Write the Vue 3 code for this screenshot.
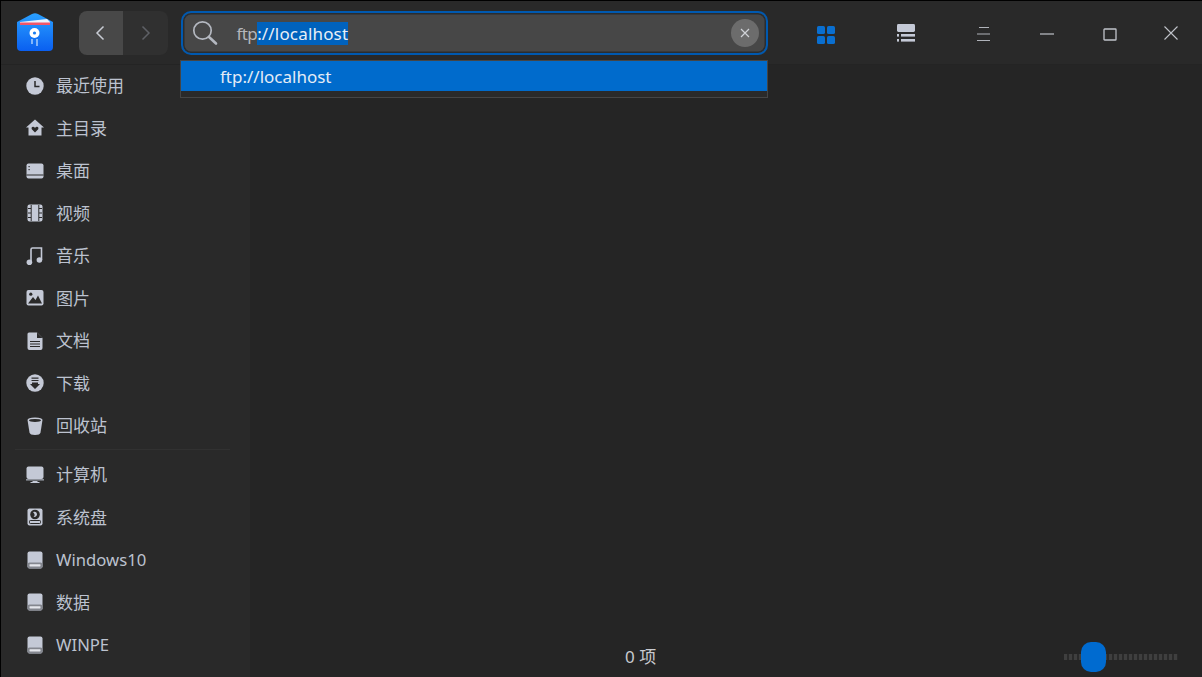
<template>
  <div class="window">
    <header class="titlebar">
      <svg class="logo" width="36" height="38" viewBox="0 0 36 38">
        <defs>
          <linearGradient id="logoBlue" x1="0" y1="0" x2="0" y2="1">
            <stop offset="0" stop-color="#2aa0ff" />
            <stop offset="1" stop-color="#0a5ff0" />
          </linearGradient>
        </defs>
        <path d="M0 9 L15 1 Q18 -0.5 21 1 L36 9 V34 Q36 38 32 38 H4 Q0 38 0 34 Z" fill="url(#logoBlue)" />
        <path d="M3 9 L30 6 L33 9 V11 H3 Z" fill="#fff" opacity="0.9" />
        <path d="M3 9.5 H33 V12 H3 Z" fill="#f0566a" />
        <circle cx="17.5" cy="20" r="5" fill="#fff" />
        <circle cx="17.5" cy="20" r="1.6" fill="#1a7cf0" />
        <path d="M15 26 V31 M20 26 V33" stroke="#cfe6ff" stroke-width="1.2" fill="none" />
      </svg>

      <div class="nav-group">
        <button class="nav-btn nav-back">
          <svg width="10" height="16" viewBox="0 0 10 16"><path d="M8.5 1.5 L2 8 L8.5 14.5" fill="none" stroke="#c8ccd4" stroke-width="1.5" /></svg>
        </button>
        <button class="nav-btn nav-forward">
          <svg width="10" height="16" viewBox="0 0 10 16"><path d="M1.5 1.5 L8 8 L1.5 14.5" fill="none" stroke="#5e6066" stroke-width="1.5" /></svg>
        </button>
      </div>

      <div class="search-box">
        <svg class="search-icon" width="26" height="26" viewBox="0 0 26 26">
          <circle cx="10.5" cy="10.5" r="8.7" fill="none" stroke="#b4b8c0" stroke-width="1.7" />
          <path d="M17 17 L24 23.5" stroke="#b4b8c0" stroke-width="2.6" stroke-linecap="round" />
        </svg>
        <div class="search-text"><span class="typed">ftp</span><span class="selected">://localhost</span></div>
        <button class="clear-btn">
          <svg width="10" height="10" viewBox="0 0 10 10"><path d="M1 1 L9 9 M9 1 L1 9" stroke="#d0d3d8" stroke-width="1.2" /></svg>
        </button>
      </div>

      <div class="tools">
        <button class="tool tool-grid">
          <svg width="18" height="18" viewBox="0 0 18 18" fill="#0a6fd0">
            <rect x="0" y="0" width="8" height="8" rx="1.6" />
            <rect x="10" y="0" width="8" height="8" rx="1.6" />
            <rect x="0" y="10" width="8" height="8" rx="1.6" />
            <rect x="10" y="10" width="8" height="8" rx="1.6" />
          </svg>
        </button>
        <button class="tool tool-list">
          <svg width="18" height="18" viewBox="0 0 18 18" fill="#c4c9d6">
            <rect x="0" y="0" width="18" height="8" rx="1.4" />
            <rect x="0" y="10" width="2" height="2.6" />
            <rect x="4" y="10" width="14" height="2.6" />
            <rect x="0" y="15" width="2" height="2.6" />
            <rect x="4" y="15" width="14" height="2.6" />
          </svg>
        </button>
        <button class="tool tool-menu">
          <svg width="14" height="14" viewBox="0 0 14 14" stroke="#b0b3ba" stroke-width="1" fill="none">
            <path d="M2 0.5 H12 M0 7 H13 M0 13.5 H13" />
          </svg>
        </button>
        <button class="tool tool-min">
          <svg width="14" height="2" viewBox="0 0 14 2"><path d="M0 1 H14" stroke="#c0c3ca" stroke-width="1.2" /></svg>
        </button>
        <button class="tool tool-max">
          <svg width="14" height="13" viewBox="0 0 14 13"><rect x="1" y="1" width="12" height="11" fill="none" stroke="#c0c3ca" stroke-width="1.3" rx="0.6" /></svg>
        </button>
        <button class="tool tool-close">
          <svg width="14" height="14" viewBox="0 0 14 14"><path d="M0.5 0.5 L13.5 13.5 M13.5 0.5 L0.5 13.5" stroke="#c0c3ca" stroke-width="1.1" /></svg>
        </button>
      </div>
    </header>

    <div class="suggest">
      <div class="suggest-item">ftp://localhost</div>
    </div>

    <div class="body">
      <aside class="sidebar">
        <div v-for="item in places" :key="item.label" class="side-item">
          <svg class="side-icon" width="18" height="18" viewBox="0 0 18 18" v-html="icons[item.icon]"></svg>
          <span class="side-label">{{ item.label }}</span>
        </div>
        <div class="separator"></div>
        <div v-for="item in devices" :key="item.label" class="side-item">
          <svg class="side-icon" width="18" height="18" viewBox="0 0 18 18" v-html="icons[item.icon]"></svg>
          <span class="side-label" :class="{ latin: item.latin }">{{ item.label }}</span>
        </div>
      </aside>

      <main class="content">
        <div class="file-area"></div>
        <footer class="statusbar">
          <span class="count">0 项</span>
          <div class="slider">
            <div class="slider-thumb"></div>
          </div>
        </footer>
      </main>
    </div>
  </div>
</template>

<script setup>
const places = [
  { label: '最近使用', icon: 'clock' },
  { label: '主目录', icon: 'home' },
  { label: '桌面', icon: 'desktop' },
  { label: '视频', icon: 'film' },
  { label: '音乐', icon: 'music' },
  { label: '图片', icon: 'picture' },
  { label: '文档', icon: 'doc' },
  { label: '下载', icon: 'download' },
  { label: '回收站', icon: 'trash' }
]

const devices = [
  { label: '计算机', icon: 'computer' },
  { label: '系统盘', icon: 'sysdisk' },
  { label: 'Windows10', icon: 'disk', latin: true },
  { label: '数据', icon: 'disk' },
  { label: 'WINPE', icon: 'disk', latin: true }
]

// 侧边栏图标
const c = '#c4c9d6'
const d = '#2a2a2a'
const icons = {
  clock: `<circle cx="9" cy="9" r="8.7" fill="${c}"/><path d="M9 4 V9.6 H13.5" fill="none" stroke="${d}" stroke-width="1.5"/>`,
  home: `<path d="M9 0.5 L18 8.5 H15.5 V16.5 H2.5 V8.5 H0 Z" fill="${c}"/><path d="M9 13.5 L5.8 10.3 Q5 8 7 7.8 Q8.4 7.8 9 9 Q9.6 7.8 11 7.8 Q13 8 12.2 10.3 Z" fill="${d}"/>`,
  desktop: `<rect x="0.5" y="1.5" width="17" height="15" rx="2" fill="${c}"/><path d="M0.5 13 H17.5" stroke="${d}" stroke-width="1"/><rect x="2.5" y="4" width="1.2" height="1.2" fill="${d}"/><rect x="2.5" y="7" width="1.2" height="1.2" fill="${d}"/>`,
  film: `<rect x="1.5" y="0.5" width="15" height="17" rx="2" fill="${c}"/><path d="M5.2 1 V17 M12.8 1 V17" stroke="${d}" stroke-width="1"/><path d="M2 4.5 H5 M2 9 H5 M2 13.5 H5 M13 4.5 H16 M13 9 H16 M13 13.5 H16" stroke="${d}" stroke-width="1"/>`,
  music: `<path d="M5 15 V2.5 Q5 1 6.5 1 H15.5 V13" fill="none" stroke="${c}" stroke-width="1.6"/><circle cx="3.4" cy="15.2" r="2.8" fill="${c}"/><circle cx="13.4" cy="13" r="2.8" fill="${c}"/>`,
  picture: `<rect x="0.5" y="1" width="17" height="15.5" rx="2" fill="${c}"/><circle cx="4.8" cy="5.2" r="1.6" fill="${d}"/><path d="M2 14.5 L7 8 L9.5 11 L12 6.5 L16 14.5 Z" fill="${d}"/>`,
  doc: `<path d="M3 0.5 H11 L16.5 6 V16 Q16.5 18 14.5 18 H3.5 Q1.5 18 1.5 16 V2 Q1.5 0.5 3 0.5 Z" fill="${c}"/><path d="M11 0.5 V6 H16.5" fill="${d}"/><path d="M4 9.5 H14 M4 12 H14 M4 14.5 H14" stroke="${d}" stroke-width="1"/>`,
  download: `<circle cx="9" cy="9" r="8.7" fill="${c}"/><path d="M5.5 4.2 H12.5 M5.5 6.5 H12.5" stroke="${d}" stroke-width="1.2"/><path d="M6 8.5 H12 V10 H14 L9 15 L4 10 H6 Z" fill="${d}"/>`,
  trash: `<path d="M1.5 3 Q1.5 0.5 9 0.5 Q16.5 0.5 16.5 3 L14.5 15.5 Q14 18 9 18 Q4 18 3.5 15.5 Z" fill="${c}"/><ellipse cx="9" cy="3.4" rx="6" ry="1.5" fill="${d}"/>`,
  computer: `<rect x="0.5" y="0.5" width="17" height="12.5" rx="2" fill="${c}"/><rect x="0" y="13" width="18" height="1.6" fill="#8e929b"/><path d="M6.5 15 H11.5 V16 H13.5 V17 H4.5 V16 H6.5 Z" fill="${c}"/>`,
  sysdisk: `<rect x="1.5" y="0.5" width="15" height="17" rx="2" fill="${c}"/><circle cx="9" cy="6.5" r="4.8" fill="${d}"/><path d="M7 4 Q11 3 11 7 Q10 9.5 7.5 9 Q10 7 7 4 Z" fill="${c}"/><rect x="3.5" y="12.5" width="11" height="3" rx="0.8" fill="none" stroke="${d}" stroke-width="1"/>`,
  disk: `<rect x="1.5" y="0.5" width="15" height="17" rx="2" fill="${c}"/><rect x="1.5" y="11.5" width="15" height="6" rx="2" fill="#84878f"/><rect x="3.5" y="13.2" width="11" height="2.2" rx="0.6" fill="#e4e6ec"/>`
}
</script>

<style>
html,
body {
  margin: 0;
  height: 100%;
  background: #252525;
  overflow: hidden;
}
</style>

<style scoped>
.window {
  position: relative;
  width: 1202px;
  height: 677px;
  box-sizing: border-box;
  display: flex;
  flex-direction: column;
  background: #252525;
  border-top: 1px solid #000;
  border-left: 1px solid #000;
  font-family: "Noto Sans", "Noto Sans CJK SC", sans-serif;
  font-size: 17px;
  color: #bcc2cf;
  overflow: hidden;
}

button {
  border: none;
  padding: 0;
  background: none;
  display: flex;
  align-items: center;
  justify-content: center;
}

.titlebar {
  height: 64px;
  flex: none;
  display: flex;
  align-items: flex-start;
  background: #292929;
  border-bottom: 1px solid #242424;
  box-sizing: border-box;
}

.logo {
  margin: 12px 0 0 16px;
  flex: none;
}

.nav-group {
  display: flex;
  margin: 10px 0 0 26px;
  height: 44px;
  border-radius: 8px;
  overflow: hidden;
}

.nav-btn {
  height: 44px;
}

.nav-back {
  width: 44px;
  padding-right: 2px;
  background: #484848;
}

.nav-forward {
  width: 45px;
  background: #303030;
}

.search-box {
  margin: 10px 0 0 13px;
  width: 587px;
  height: 44px;
  box-sizing: border-box;
  display: flex;
  align-items: center;
  background: #474747;
  border: 2.5px solid #0059b0;
  border-radius: 10px;
  box-shadow: inset 0 0 0 1.5px #2a2d30;
}

.search-icon {
  margin-left: 8.5px;
  flex: none;
}

.search-text {
  margin-left: 19px;
  flex: 1;
  line-height: 23px;
  color: #b4b6ba;
}

.typed {
  letter-spacing: -0.6px;
}

.selected {
  display: inline-block;
  letter-spacing: 0.17px;
  background: #0062bd;
  color: #e8eef6;
}

.clear-btn {
  width: 28px;
  height: 28px;
  margin-right: 7.5px;
  border-radius: 50%;
  background: #6c6c6c;
}

.tools {
  flex: 1;
  height: 64px;
  display: grid;
  grid-template-columns: 80px 80px 75px 52px 73px 50px;
  padding-left: 18px;
  align-items: center;
  justify-items: center;
}

.tool {
  height: 64px;
  width: 100%;
}

.tool-grid {
  padding-top: 4px;
}

.tool-menu {
  padding-top: 2px;
}

.tool-min {
  padding-top: 2px;
}

.tool-max {
  padding-top: 3px;
}

.suggest {
  position: absolute;
  left: 179px;
  top: 59px;
  width: 588px;
  height: 38px;
  box-sizing: border-box;
  background: #2a2a2a;
  border: 1px solid #454545;
  z-index: 5;
}

.suggest-item {
  height: 30px;
  line-height: 31px;
  padding-left: 39px;
  background: #006bcc;
  color: #e4ecf6;
}

.body {
  flex: 1;
  display: flex;
  min-height: 0;
}

.sidebar {
  width: 249px;
  flex: none;
  background: #292929;
  box-sizing: border-box;
}

.side-item {
  height: 42.5px;
  display: flex;
  align-items: center;
  padding-left: 25px;
  gap: 12px;
}

.side-icon {
  flex: none;
  margin-top: -1px;
}

.side-label {
  margin-top: -3px;
}

.side-label.latin {
  font-size: 16.67px;
  margin-top: -1px;
}

.separator {
  height: 6.5px;
  margin: 0 20px 0 14px;
  box-sizing: border-box;
  border-top: 1px solid #313131;
  position: relative;
  top: 1px;
}

.content {
  flex: 1;
  display: flex;
  flex-direction: column;
  background: #252525;
}

.file-area {
  flex: 1;
}

.statusbar {
  height: 40px;
  flex: none;
  display: flex;
  align-items: center;
  padding-left: 375px;
  color: #c8cacf;
}

.count {
  font-size: 17px;
  margin-top: -3px;
  flex: 1;
}

.slider {
  position: relative;
  width: 114px;
  height: 6px;
  margin-right: 24px;
  background: repeating-linear-gradient(90deg, #3f3f3f 0 3px, #2a2a2a 3px 5px);
}

.slider-thumb {
  position: absolute;
  left: 17px;
  top: -12px;
  width: 25px;
  height: 30px;
  border-radius: 10px;
  background: #006bd0;
}
</style>
